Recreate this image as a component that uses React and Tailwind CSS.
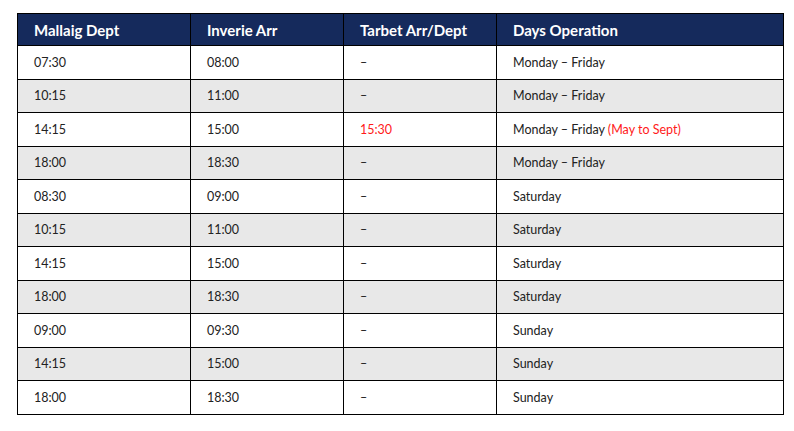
const rows = [
  ["07:30", "08:00", "–", "Monday – Friday"],
  ["10:15", "11:00", "–", "Monday – Friday"],
  ["14:15", "15:00", "15:30", "Monday – Friday", "(May to Sept)"],
  ["18:00", "18:30", "–", "Monday – Friday"],
  ["08:30", "09:00", "–", "Saturday"],
  ["10:15", "11:00", "–", "Saturday"],
  ["14:15", "15:00", "–", "Saturday"],
  ["18:00", "18:30", "–", "Saturday"],
  ["09:00", "09:30", "–", "Sunday"],
  ["14:15", "15:00", "–", "Sunday"],
  ["18:00", "18:30", "–", "Sunday"],
];

export default function App() {
  return (
    <div className="w-[794px] h-[431px] bg-white pt-[13px] pl-[17px] font-['Lato',sans-serif]">
      <table className="w-[767px] border-collapse table-fixed">
        <colgroup>
          <col className="w-[173px]" />
          <col className="w-[153px]" />
          <col className="w-[153px]" />
          <col />
        </colgroup>
        <thead>
          <tr className="h-[32px] bg-[#152a5c] text-white text-[15px] font-bold text-left">
            <th className="border border-black pl-4 pt-[2px]">Mallaig Dept</th>
            <th className="border border-black pl-4 pt-[2px]">Inverie Arr</th>
            <th className="border border-black pl-4 pt-[2px]">Tarbet Arr/Dept</th>
            <th className="border border-black pl-4 pt-[2px]">Days Operation</th>
          </tr>
        </thead>
        <tbody className="text-[12.5px] text-[#222]">
          {rows.map((r, i) => (
            <tr key={i} className={i % 2 ? "h-[33.5px] bg-[#e8e8e8]" : "h-[33.5px] bg-white"}>
              <td className="border border-black pl-4 pt-[2px]">{r[0]}</td>
              <td className="border border-black pl-4 pt-[2px]">{r[1]}</td>
              <td className={r[2] === "–" ? "border border-black pl-4 pt-[2px]" : "border border-black pl-4 pt-[2px] text-[#ff1a1a]"}>{r[2]}</td>
              <td className="border border-black pl-4 pt-[2px]">
                {r[3]}
                {r[4] && <span className="text-[#ff1a1a]"> {r[4]}</span>}
              </td>
            </tr>
          ))}
        </tbody>
      </table>
    </div>
  );
}
